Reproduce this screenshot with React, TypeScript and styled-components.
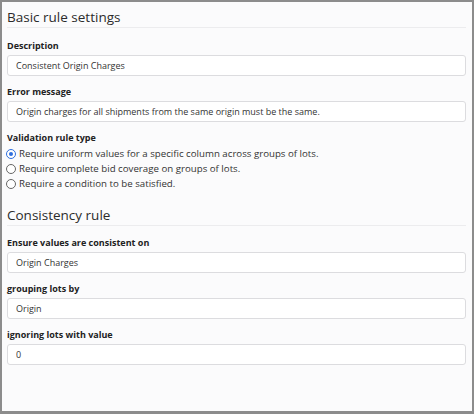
import React from "react";
import styled, { createGlobalStyle } from "styled-components";

const Global = createGlobalStyle`
  html, body { margin: 0; padding: 0; background: #8c8c8c; }
  body { font-family: "Open Sans", "Liberation Sans", sans-serif; color: #333; }
  * { box-sizing: border-box; }
`;

const Frame = styled.div`
  width: 474px;
  height: 414px;
  border-top: 2px solid #8c8c8c;
  border-left: 2px solid #8c8c8c;
  border-right: 2px solid #8c8c8c;
  border-bottom: 3px solid #8c8c8c;
  background: #fbfbfc;
  padding: 5px 6px 0 5px;
  display: flex;
  flex-direction: column;
  overflow: hidden;
`;

const Section = styled.section`
  display: flex;
  flex-direction: column;
`;

const Heading = styled.h2<{ $gap?: number }>`
  margin: 0;
  font-size: 13.5px;
  font-weight: 400;
  line-height: 20px;
  color: #2b2b2b;
  border-bottom: 1px solid #ececee;
  margin-bottom: ${(p) => p.$gap ?? 12}px;
`;

const Field = styled.div`
  display: flex;
  flex-direction: column;
  margin-bottom: 10px;
`;

const Label = styled.label`
  font-size: 9px;
  font-weight: 700;
  line-height: 12px;
  color: #222;
  margin-bottom: 3px;
`;

const Input = styled.input`
  width: 100%;
  height: 21px;
  border: 1px solid #dcdcdf;
  border-radius: 3px;
  background: #fff;
  padding: 0 8px;
  font-family: "Open Sans", "Liberation Sans", sans-serif;
  font-size: 9px;
  color: #333;
  outline: none;
`;

const RadioGroup = styled.div`
  display: flex;
  flex-direction: column;
  gap: 3px;
  margin-top: 1px;
  margin-bottom: 15px;
`;

const RadioRow = styled.label`
  display: flex;
  align-items: center;
  gap: 3px;
  font-size: 9.7px;
  line-height: 12px;
  color: #333;
`;

const RadioDot = styled.span<{ $on?: boolean }>`
  width: 10px;
  height: 10px;
  margin-left: -1px;
  border-radius: 50%;
  border: 1px solid ${(p) => (p.$on ? "#2f6fde" : "#666")};
  background: #fff;
  display: flex;
  align-items: center;
  justify-content: center;
  flex: none;
  &::after {
    content: "";
    display: ${(p) => (p.$on ? "block" : "none")};
    width: 4px;
    height: 4px;
    border-radius: 50%;
    background: #2f6fde;
  }
`;

const radios = [
  "Require uniform values for a specific column across groups of lots.",
  "Require complete bid coverage on groups of lots.",
  "Require a condition to be satisfied.",
];

export default function App() {
  return (
    <>
      <Global />
      <Frame>
        <Section>
          <Heading>Basic rule settings</Heading>
          <Field>
            <Label>Description</Label>
            <Input readOnly value="Consistent Origin Charges" />
          </Field>
          <Field>
            <Label>Error message</Label>
            <Input
              readOnly
              value="Origin charges for all shipments from the same origin must be the same."
            />
          </Field>
          <Label>Validation rule type</Label>
          <RadioGroup>
            {radios.map((r, i) => (
              <RadioRow key={r}>
                <RadioDot $on={i === 0} />
                {r}
              </RadioRow>
            ))}
          </RadioGroup>
        </Section>
        <Section>
          <Heading $gap={11}>Consistency rule</Heading>
          <Field>
            <Label>Ensure values are consistent on</Label>
            <Input readOnly value="Origin Charges" />
          </Field>
          <Field>
            <Label>grouping lots by</Label>
            <Input readOnly value="Origin" />
          </Field>
          <Field>
            <Label>ignoring lots with value</Label>
            <Input readOnly value="0" />
          </Field>
        </Section>
      </Frame>
    </>
  );
}
